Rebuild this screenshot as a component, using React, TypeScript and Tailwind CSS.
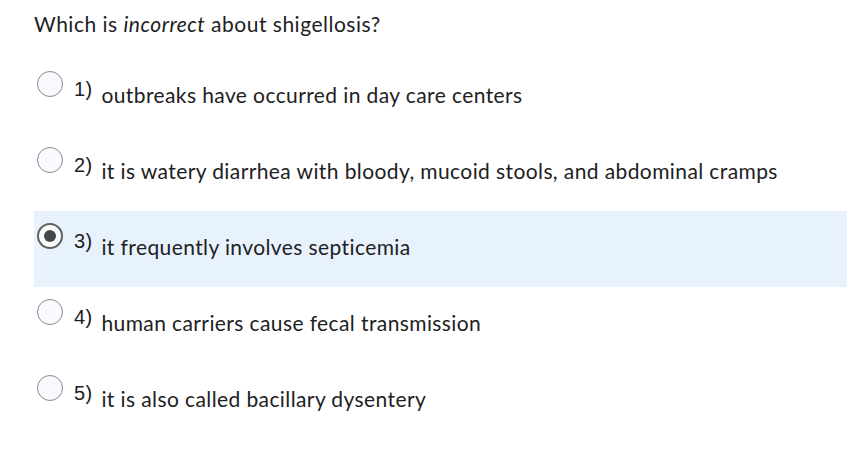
export default function App() {
  const options = [
    "outbreaks have occurred in day care centers",
    "it is watery diarrhea with bloody, mucoid stools, and abdominal cramps",
    "it frequently involves septicemia",
    "human carriers cause fecal transmission",
    "it is also called bacillary dysentery",
  ];
  const selected = 2;

  return (
    <div className="min-h-screen bg-white pl-[34px] pt-[10px] text-[#202122] [font-family:Lato,'Noto_Sans',sans-serif]">
      <p className="text-[21px] leading-[28px] tracking-[0.5px]">
        Which is <em>incorrect</em> about shigellosis?
      </p>
      <div className="mt-[21px] w-[813px]">
        {options.map((text, i) => (
          <div
            key={i}
            className={
              "flex h-[76px] items-start pt-[12px] pl-[3px] " +
              (i === selected ? "bg-[#e8f2fc]" : "")
            }
          >
            {i === selected ? (
              <div className="flex h-[26px] w-[26px] shrink-0 items-center justify-center rounded-full border-2 border-[#5d6164] bg-[#fbfbfc]">
                <div className="h-[12px] w-[12px] rounded-full bg-[#45484b]" />
              </div>
            ) : (
              <div className="h-[26px] w-[26px] shrink-0 rounded-full border border-[#868a8f] bg-[#f9fafe]" />
            )}
            <span className="ml-[11px] mt-[8px] text-[20px] leading-[20px] tracking-[0.3px] [font-family:'Liberation_Sans',Arial,sans-serif]">
              {i + 1})
            </span>
            <span className="ml-[9px] mt-[12px] text-[21px] leading-[24px] tracking-[0.4px]">{text}</span>
          </div>
        ))}
      </div>
    </div>
  );
}
